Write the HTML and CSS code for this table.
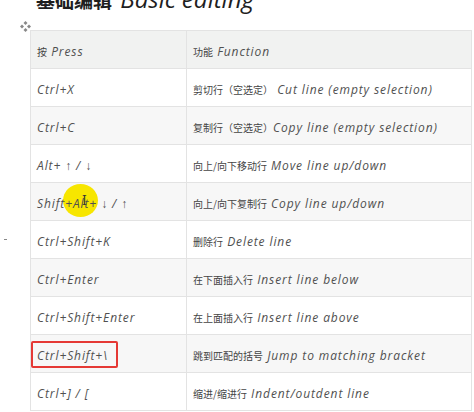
FILE: index.html
```html
<!DOCTYPE html>
<html>
<head>
<meta charset="utf-8">
<link rel="stylesheet" href="styles.css">
</head>
<body>
<h1 class="title"><span class="zh-t">基础编辑</span> <span class="en-t">Basic editing</span></h1>
<div class="wrap">
  <svg class="move" width="11" height="11" viewBox="0 0 11 11"><g fill="#888"><path d="M5.5 0 7.5 2 5.5 4 3.5 2Z"/><path d="M5.5 7 7.5 9 5.5 11 3.5 9Z"/><path d="M2 3.5 4 5.5 2 7.5 0 5.5Z"/><path d="M9 3.5 11 5.5 9 7.5 7 5.5Z"/></g></svg>
  <span class="dash"></span>
  <table class="keys">
    <thead>
      <tr><th><span class="zh">按</span> <span class="en">Press</span></th><th><span class="zh">功能</span> <span class="en">Function</span></th></tr>
    </thead>
    <tbody>
      <tr><td><span class="en">Ctrl+X</span></td><td><span class="zh">剪切行（空选定）</span> <span class="en">Cut line (empty selection)</span></td></tr>
      <tr><td><span class="en">Ctrl+C</span></td><td><span class="zh">复制行（空选定）</span><span class="en">Copy line (empty selection)</span></td></tr>
      <tr><td><span class="en">Alt+ ↑ / ↓</span></td><td><span class="zh">向上/向下移动行</span> <span class="en">Move line up/down</span></td></tr>
      <tr><td class="hl-cell"><span class="spot"></span><span class="en over">Shift+Alt+ ↓ / ↑</span><span class="ibeam">I</span></td><td><span class="zh">向上/向下复制行</span> <span class="en">Copy line up/down</span></td></tr>
      <tr><td><span class="en">Ctrl+Shift+K</span></td><td><span class="zh">删除行</span> <span class="en">Delete line</span></td></tr>
      <tr><td><span class="en">Ctrl+Enter</span></td><td><span class="zh">在下面插入行</span> <span class="en">Insert line below</span></td></tr>
      <tr><td><span class="en">Ctrl+Shift+Enter</span></td><td><span class="zh">在上面插入行</span> <span class="en">Insert line above</span></td></tr>
      <tr><td class="hl-cell"><span class="en">Ctrl+Shift+\</span><span class="redbox"></span></td><td><span class="zh">跳到匹配的括号</span> <span class="en">Jump to matching bracket</span></td></tr>
      <tr><td><span class="en">Ctrl+] / [</span></td><td><span class="zh">缩进/缩进行</span> <span class="en">Indent/outdent line</span></td></tr>
    </tbody>
  </table>
</div>
</body>
</html>
```
FILE: styles.css
```css
html, body {
  margin: 0;
  padding: 0;
  background: #fff;
  overflow: hidden;
}
body {
  font-family: "Open Sans", "Noto Sans CJK SC", sans-serif;
  color: #555;
}
.title {
  margin: -17px 0 0 36px;
  height: 26px;
  line-height: 26px;
  font-weight: normal;
  color: #1e1e1e;
  white-space: nowrap;
}
.zh-t {
  font-family: "Noto Sans CJK SC", sans-serif;
  font-size: 19px;
  font-weight: bold;
}
.en-t {
  font-family: "Open Sans", sans-serif;
  font-style: italic;
  font-size: 24px;
}
.wrap {
  position: relative;
  margin: 21px 2px 0 30px;
}
.move {
  position: absolute;
  left: -10px;
  top: -9px;
}
.dash {
  position: absolute;
  left: -26px;
  top: 209px;
  width: 3px;
  height: 1px;
  background: #888;
}
.keys {
  width: 442px;
  border-collapse: collapse;
  table-layout: fixed;
}
.keys th, .keys td {
  height: 37px;
  padding: 0 0 0 6px;
  text-align: left;
  font-weight: normal;
  border: 1px solid #e3e3e3;
  white-space: nowrap;
  overflow: visible;
}
.keys th:first-child, .keys td:first-child {
  width: 149px;
}
.keys thead th {
  background: #f1f2f1;
}
.keys tbody tr:nth-child(even) td {
  background: #f7f7f7;
}
.zh {
  font-family: "Noto Sans CJK SC", sans-serif;
  font-size: 10px;
  color: #444;
}
.en {
  font-family: "Open Sans", sans-serif;
  font-style: italic;
  font-size: 12px;
  letter-spacing: 0.9px;
  color: #505050;
}
.hl-cell {
  position: relative;
}
.over {
  position: relative;
  z-index: 1;
}
.spot {
  position: absolute;
  left: 32px;
  top: 1px;
  width: 35px;
  height: 33px;
  border-radius: 50%;
  background: #f7e600;
}
.ibeam {
  position: absolute;
  z-index: 2;
  left: 51px;
  top: 11px;
  font-family: "DejaVu Serif", serif;
  font-size: 12px;
  color: #333;
}
.redbox {
  position: absolute;
  left: 0;
  top: 6px;
  width: 83px;
  height: 23px;
  border: 2px solid #e53935;
  border-radius: 2px;
}
```
